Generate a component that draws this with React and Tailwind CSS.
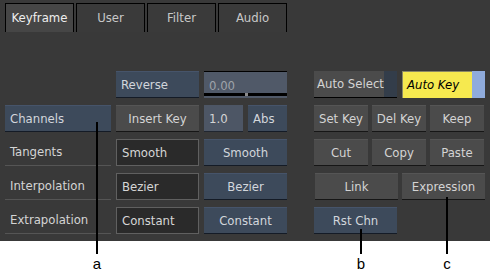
import React from "react";

const blue = "bg-[#3d4a5b] border-b border-b-[#141b26] border-t border-t-[#46546a] text-[#d2d6dc]";
const gray = "bg-[#4b4b4b] border-b border-b-[#161616] border-t border-t-[#555] text-[#d4d4d4]";
const field = "bg-[#2a2a2a] border border-[#606060] text-[#d6d6d6]";

const Btn = ({ cls, children, align = "center", w }) => (
  <div className={`${cls} ${w} h-[27px] flex items-center ${align === "left" ? "justify-start pl-[5px]" : "justify-center"} leading-none whitespace-nowrap`}>
    {children}
  </div>
);

const Label = ({ children }) => (
  <div className="h-[27px] flex items-center pl-[5px] text-[#d4d4d4] border-b border-[#555]">{children}</div>
);

const tabs = ["Keyframe", "User", "Filter", "Audio"];

export default function App() {
  return (
    <div className="relative w-[490px] h-[272px] bg-white overflow-hidden font-['DejaVu_Sans_Condensed','DejaVu_Sans',sans-serif] text-[13px]">
      {/* Panel */}
      <div className="h-[241px] bg-[#393939]">
        <div className="flex gap-[2px] pl-[5px] pt-[3px]">
          {tabs.map((t, i) => (
            <div key={t}
              className={`w-[69px] h-[29px] border border-black border-b-0 flex items-center justify-center ${i === 0 ? "bg-[#464646] text-[#eeeeee]" : "bg-[#3a3a3a] text-[#c8c8c8]"}`}>
              {t}
            </div>
          ))}
        </div>

        <div className="flex pl-[5px] pt-[39px]">
          {/* Left block */}
          <div className="grid grid-cols-[106px_83px_83px] auto-rows-[27px] gap-x-[5px] gap-y-[7px]">
            <div />
            <Btn cls={blue} align="left" w="w-[83px]">Reverse</Btn>
            <div className="relative bg-[#505968] border-t border-t-black text-[#9ea3aa] flex items-start pl-[5px] pt-[4px]">
              0.00
              <div className="absolute left-0 right-0 bottom-[2px] h-[3px] bg-black" />
              <div className="absolute left-[41px] bottom-[2px] w-[3px] h-[3px] bg-[#8a8a8a]" />
            </div>

            <Btn cls={blue} align="left" w="w-[106px]">Channels</Btn>
            <Btn cls={gray} w="w-[83px]">Insert Key</Btn>
            <div className="flex gap-[5px]">
              <Btn cls="bg-[#4d5665] border-b border-b-[#202630] text-[#d4d4d4]" align="left" w="w-[39px]">1.0</Btn>
              <Btn cls={blue} align="left" w="w-[39px]">Abs</Btn>
            </div>

            <Label>Tangents</Label>
            <Btn cls={field} align="left" w="w-[83px]">Smooth</Btn>
            <Btn cls={blue} w="w-[83px]">Smooth</Btn>

            <Label>Interpolation</Label>
            <Btn cls={field} align="left" w="w-[83px]">Bezier</Btn>
            <Btn cls={blue} w="w-[83px]">Bezier</Btn>

            <Label>Extrapolation</Label>
            <Btn cls={field} align="left" w="w-[83px]">Constant</Btn>
            <Btn cls={blue} w="w-[83px]">Constant</Btn>
          </div>

          {/* Right block */}
          <div className="ml-[27px] flex flex-col gap-[7px]">
            <div className="flex gap-[5px]">
              <div className="flex w-[83px] h-[27px] border-b border-b-black">
                <div className="flex-1 bg-[#4b4b4b] text-[#d4d4d4] flex items-center pl-[3px] whitespace-nowrap">Auto Select</div>
                <div className="w-[13px] bg-[#333d4a]" />
              </div>
              <div className="flex w-[83px] h-[27px]">
                <div className="flex-1 bg-[#f6e94f] border-t border-l border-[#8a8866] text-black italic flex items-center pl-[4px]">Auto Key</div>
                <div className="w-[13px] bg-[#8fabdc]" />
              </div>
            </div>
            <div className="flex gap-[4px]">
              <Btn cls={gray} w="w-[54px]">Set Key</Btn>
              <Btn cls={gray} w="w-[54px]">Del Key</Btn>
              <Btn cls={gray} w="w-[54px]">Keep</Btn>
            </div>
            <div className="flex gap-[4px]">
              <Btn cls={gray} w="w-[54px]">Cut</Btn>
              <Btn cls={gray} w="w-[54px]">Copy</Btn>
              <Btn cls={gray} w="w-[54px]">Paste</Btn>
            </div>
            <div className="flex gap-[4px] pl-[1px]">
              <Btn cls={gray} w="w-[83px]">Link</Btn>
              <Btn cls={gray} w="w-[83px]">Expression</Btn>
            </div>
            <div className="flex">
              <Btn cls={blue} w="w-[83px]">Rst Chn</Btn>
            </div>
          </div>
        </div>
      </div>

      {/* Callouts */}
      <div className="absolute left-[96px] top-[122px] w-[2px] h-[132px] bg-black" />
      <div className="absolute left-[360px] top-[229px] w-[2px] h-[25px] bg-black" />
      <div className="absolute left-[446px] top-[197px] w-[2px] h-[57px] bg-black" />
      <div className="absolute left-[92px] top-[253px] w-[10px] text-center text-black text-[15px] font-['Liberation_Sans',sans-serif]">a</div>
      <div className="absolute left-[356px] top-[253px] w-[10px] text-center text-black text-[15px] font-['Liberation_Sans',sans-serif]">b</div>
      <div className="absolute left-[442px] top-[253px] w-[10px] text-center text-black text-[15px] font-['Liberation_Sans',sans-serif]">c</div>
    </div>
  );
}
